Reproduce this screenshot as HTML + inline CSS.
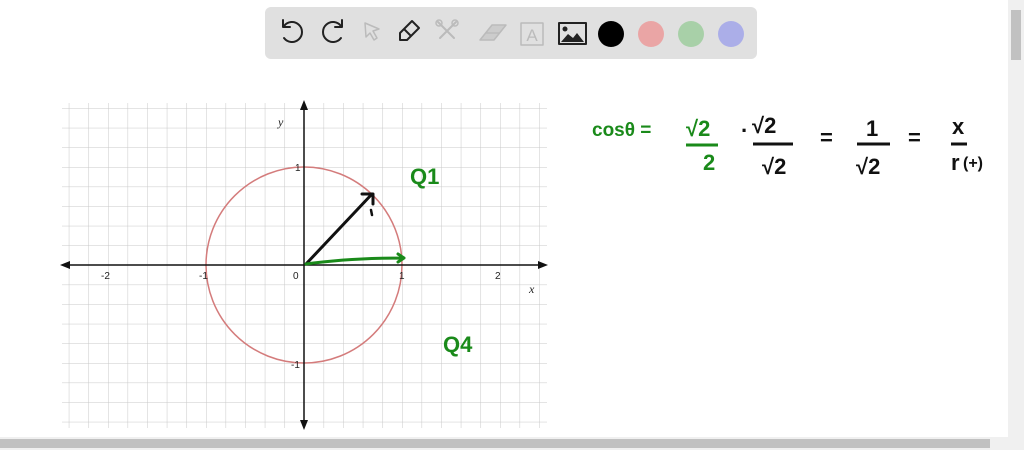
<!DOCTYPE html>
<html><head><meta charset="utf-8"><style>
html,body{margin:0;padding:0;width:1024px;height:450px;overflow:hidden;background:#fff;font-family:"Liberation Sans",sans-serif}
.tb{position:absolute;left:265px;top:7px;width:492px;height:52px;background:#e0e0e0;border-radius:6px}
</style></head><body>
<div class="tb"></div>
<svg width="1024" height="450" style="position:absolute;left:0;top:0">
<defs>
<pattern id="g" x="304" y="265" width="19.6" height="19.6" patternUnits="userSpaceOnUse">
<path d="M0 0V19.6M0 0H19.6" stroke="#c8c8c8" stroke-width="1" fill="none"/>
</pattern>
</defs>
<g fill="none" stroke="#222" stroke-width="2" stroke-linecap="round" stroke-linejoin="round">
<path d="M284 26a10 10 0 1 1 0 12"/><path d="M283 20v7h7"/>
<path d="M341 26a10 10 0 1 0 0 12"/><path d="M342 20v7h-7"/>
<path d="M365 23l14 6-6 2 4 7-3 2-4-7-4 4z" stroke="#bbb" stroke-width="1.5"/>
<path d="M400 40l0-7 12-12 7 7-12 12z M404 29l7 7"/>
<path d="M440 24l14 14M454 24l-14 14M438 22l4 4M456 22l-4 4" stroke="#bbb" stroke-width="2"/>
<circle cx="439" cy="23" r="3" stroke="#bbb" stroke-width="1.5"/><circle cx="455" cy="23" r="3" stroke="#bbb" stroke-width="1.5"/>
<path d="M480 40l12-15h14l-12 15z M486 33h13" stroke="#bbb" stroke-width="1.5" fill="#ccc"/>
<rect x="521" y="23" width="22" height="22" stroke="#bbb" stroke-width="1.5"/>
<rect x="559" y="23" width="27" height="21" stroke="#222" stroke-width="2"/>
</g>
<text x="532" y="41" font-size="17" fill="#bbb" text-anchor="middle">A</text>
<circle cx="565" cy="29" r="2.5" fill="#222"/><path d="M561 42l7-8 5 4 4-5 7 9z" fill="#222"/>
<circle cx="611" cy="34" r="13" fill="#000"/>
<circle cx="651" cy="34" r="13" fill="#eaa5a5"/>
<circle cx="691" cy="34" r="13" fill="#a8d0a8"/>
<circle cx="731" cy="34" r="13" fill="#abaee8"/>
<rect x="62" y="103" width="485" height="325" fill="url(#g)"/>
<circle cx="304" cy="265" r="98" fill="none" stroke="#d47c7c" stroke-width="1.5"/>
<g stroke="#111" stroke-width="1.5">
<path d="M66 265H543M304 107V424"/>
</g>
<path d="M60 265l10-4v8z M548 265l-10-4v8z M304 100l-4 10h8z M304 430l-4-10h8z" fill="#111"/>
<g font-size="10" fill="#222">
<text x="101" y="279">-2</text><text x="199" y="279">-1</text><text x="293" y="279">0</text><text x="399" y="279">1</text><text x="495" y="279">2</text>
<text x="295" y="171">1</text><text x="291" y="368">-1</text>
<text x="529" y="293" font-style="italic" font-family="Liberation Serif" font-size="12">x</text>
<text x="278" y="126" font-style="italic" font-family="Liberation Serif" font-size="12">y</text>
</g>
<g fill="none" stroke-linecap="round" stroke-linejoin="round">
<path d="M306 264L372 194M362 194h11v10" stroke="#111" stroke-width="3"/>
<path d="M371 210l1 5" stroke="#111" stroke-width="2.5"/>
<path d="M306 264Q350 258 404 258M398 254l6 4-6 4" stroke="#1a8a1a" stroke-width="3"/>
</g>
<g fill="#1a8a1a" font-size="22" font-weight="bold">
<text x="410" y="184">Q1</text><text x="443" y="352">Q4</text>
<text x="592" y="136" font-size="19">cosθ =</text>
<text x="686" y="136">√2</text><text x="703" y="170">2</text>
</g>
<path d="M686 145h32" stroke="#1a8a1a" stroke-width="3"/>
<g fill="#111" font-size="22" font-weight="bold">
<text x="741" y="138">·</text><text x="752" y="133">√2</text><text x="762" y="174">√2</text>
<text x="820" y="145">=</text><text x="866" y="136">1</text><text x="856" y="174">√2</text>
<text x="908" y="145">=</text><text x="952" y="134">x</text><text x="951" y="170">r</text><text x="963" y="168" font-size="16">(+)</text>
</g>
<g stroke="#111" stroke-width="3"><path d="M753 144h40M857 144h33M951 144h16"/></g>
<rect x="1008" y="0" width="16" height="437" fill="#f0f0f0"/>
<rect x="1011" y="10" width="10" height="50" fill="#c1c1c1"/>
<rect x="0" y="437" width="1024" height="13" fill="#f0f0f0"/>
<rect x="0" y="439" width="990" height="9" fill="#c1c1c1"/>
</svg>
</body></html>
